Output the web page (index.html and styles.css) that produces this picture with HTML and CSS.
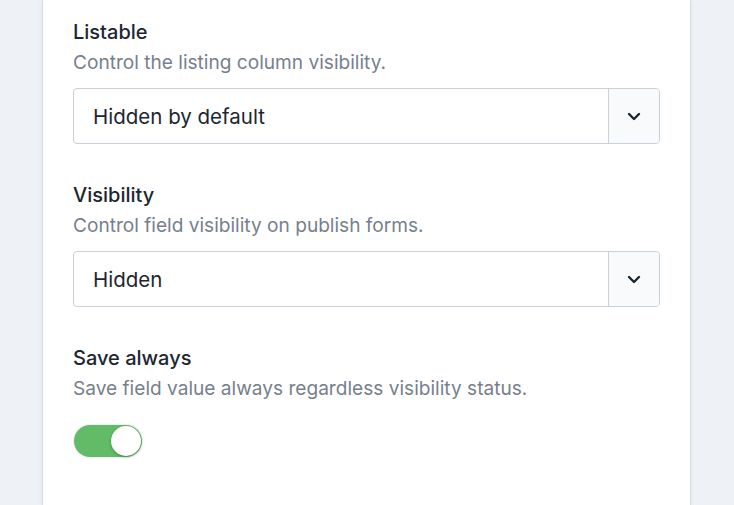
FILE: index.html
```html
<!DOCTYPE html>
<html>
<head>
<meta charset="utf-8">
<link rel="stylesheet" href="styles.css">
</head>
<body>
<div class="panel">
  <div class="field">
    <div class="label">Listable</div>
    <div class="help">Control the listing column visibility.</div>
    <div class="select">
      <div class="select-value">Hidden by default</div>
      <div class="select-btn"><svg width="14" height="9" viewBox="0 0 14 9"><path d="M2 2l5 5 5-5" fill="none" stroke="#1c2630" stroke-width="2.4" stroke-linecap="round" stroke-linejoin="round"/></svg></div>
    </div>
  </div>
  <div class="field">
    <div class="label">Visibility</div>
    <div class="help">Control field visibility on publish forms.</div>
    <div class="select">
      <div class="select-value">Hidden</div>
      <div class="select-btn"><svg width="14" height="9" viewBox="0 0 14 9"><path d="M2 2l5 5 5-5" fill="none" stroke="#1c2630" stroke-width="2.4" stroke-linecap="round" stroke-linejoin="round"/></svg></div>
    </div>
  </div>
  <div class="field">
    <div class="label">Save always</div>
    <div class="help">Save field value always regardless visibility status.</div>
    <div class="toggle"><div class="knob"></div></div>
  </div>
</div>
</body>
</html>
```
FILE: styles.css
```css
html, body {
  margin: 0;
  padding: 0;
}
body {
  background: #eef1f6;
  font-family: Inter, "Noto Sans", sans-serif;
  height: 505px;
  overflow: hidden;
}
.panel {
  margin-left: 43px;
  width: 647px;
  height: 505px;
  box-sizing: border-box;
  background: #fff;
  padding: 19px 30px 0 30px;
  box-shadow: 0 0 0 1px rgba(200, 208, 220, 0.5), 0 1px 4px rgba(160, 170, 185, 0.25);
}
.field {
  margin-bottom: 38px;
}
.label {
  font-size: 20px;
  font-weight: 500;
  line-height: 26px;
  color: #1c2630;
}
.help {
  margin-top: 5px;
  font-size: 19.1px;
  line-height: 24px;
  color: #76808c;
}
.select {
  margin-top: 14px;
  display: flex;
  height: 56px;
  box-sizing: border-box;
  border: 1px solid #c9d0d9;
  border-radius: 4px;
  overflow: hidden;
}
.select-value {
  flex: 1;
  display: flex;
  align-items: center;
  padding-left: 19px;
  font-size: 20.5px;
  color: #1c2630;
}
.select-btn {
  width: 50px;
  border-left: 1px solid #c9d0d9;
  background: #f9fafb;
  display: flex;
  align-items: center;
  justify-content: center;
}
.toggle {
  margin-top: 25px;
  margin-left: 1px;
  width: 68px;
  height: 32px;
  border-radius: 16px;
  background: #62bb67;
  box-shadow: 0 0 0 1px rgba(0, 0, 0, 0.06);
  display: flex;
  align-items: center;
  justify-content: flex-end;
  padding: 1px;
  box-sizing: border-box;
}
.knob {
  width: 30px;
  height: 30px;
  border-radius: 50%;
  background: #fff;
  box-shadow: 0 1px 3px rgba(0, 0, 0, 0.3);
}
```
